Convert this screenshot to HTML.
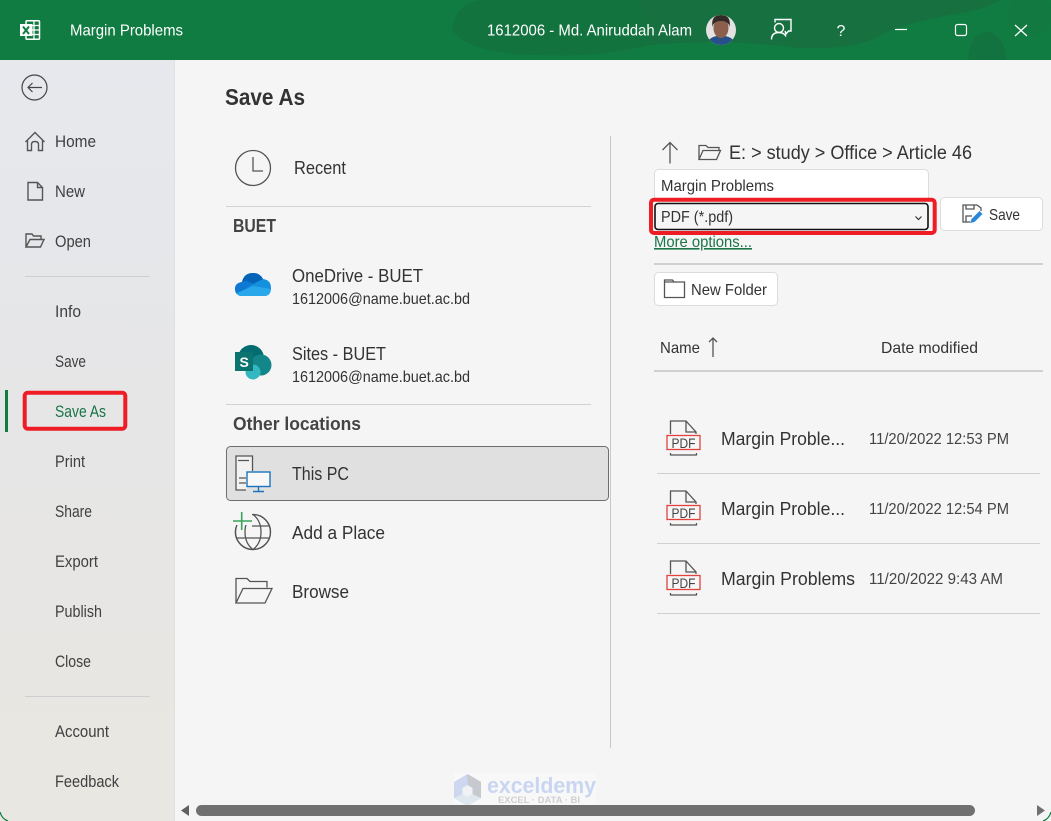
<!DOCTYPE html>
<html><head><meta charset="utf-8"><style>
html,body{margin:0;padding:0;width:1051px;height:821px;overflow:hidden;background:#f5f5f5}
svg{display:block}
text{font-family:"Liberation Sans",sans-serif;fill:#333;font-size:16px}
.s{font-size:16.5px;fill:#404040}
.m{font-size:18.5px;fill:#333}
.b{font-size:18.5px;font-weight:bold;fill:#444}
.w{fill:#fff;font-size:16px}
.t{font-size:16px;fill:#333}
.d{font-size:16px;fill:#444}
.n{font-size:18.5px;fill:#333}
.p{font-size:13.5px;fill:#444}
.i{fill:none;stroke:#444;stroke-width:1.2}
.g{fill:none;stroke:#555;stroke-width:1.3}
</style></head><body>
<svg width="1051" height="821" viewBox="0 0 1051 821" xmlns="http://www.w3.org/2000/svg">
<defs><linearGradient id="sb" x1="0" y1="0" x2="0" y2="1"><stop offset="0" stop-color="#e6e8ed"/><stop offset=".5" stop-color="#e6e6e6"/><stop offset="1" stop-color="#e9e7e1"/></linearGradient>
<clipPath id="hc"><rect width="1051" height="60"/></clipPath>
<clipPath id="av"><circle cx="721" cy="30" r="15"/></clipPath></defs>
<rect width="1051" height="821" fill="#f5f5f5"/>
<!-- header -->
<rect width="1051" height="60" fill="#107c41"/>
<g clip-path="url(#hc)">
<path d="M452 30Q455 5 480 0H640L650 45Q600 58 540 55Q470 55 452 30Z" fill="#13733f"/>
<path d="M640 0H1000Q985 10 950 15Q900 25 885 33Q860 50 800 48Q720 38 650 45Z" fill="#167040"/>
<path d="M968 60Q970 32 988 32Q1004 34 1006 60Z" fill="#137340"/>
<circle cx="1030" cy="14" r="22" fill="#127a41"/>
</g>
<!-- excel logo -->
<g>
<rect x="26" y="20.800" width="13.500" height="18.500" rx="1" fill="none" stroke="#fff" stroke-width="1.500"/>
<path d="M32 25.500h7.500M32 30h7.500M32 34.500h7.500M34 21v18" stroke="#fff" stroke-width="1.300"/>
<rect x="20" y="24" width="12.500" height="12" fill="#fff"/>
<path d="M23 26.500l6 7.500M29 26.500l-6 7.500" stroke="#107c41" stroke-width="2"/>
</g>
<text class="w" x="70" y="35.500" textLength="113" lengthAdjust="spacingAndGlyphs">Margin Problems</text>
<text class="w" x="487" y="35.500" textLength="205" lengthAdjust="spacingAndGlyphs">1612006 - Md. Aniruddah Alam</text>
<!-- avatar -->
<circle cx="721" cy="30" r="15" fill="#e3e1e1"/>
<g clip-path="url(#av)">
<path d="M706 45q3-8 11-9h8q8 1 11 9z" fill="#27508a"/>
<ellipse cx="721" cy="28" rx="7.500" ry="10" fill="#8c5f4c"/>
<path d="M712.500 27q-2-12 8.500-12 10.500 0 8.500 12-1-6-8.500-6-7.500 0-8.500 6z" fill="#322a26"/>
</g>
<!-- comments icon -->
<g fill="none" stroke="#fff" stroke-width="1.400">
<path d="M775 22.500v-3h16v11.500h-2.500l-2.500 3-1-3"/>
<circle cx="779" cy="28" r="4.500"/>
<path d="M771.500 39.500q0-7 7.500-7 5 0 7 4"/>
</g>
<text x="836.500" y="36" style="font-size:16px;fill:#fff">?</text>
<path d="M895 29.500h12" stroke="#fff" stroke-width="1.200"/>
<rect x="955.500" y="24.500" width="11" height="11" rx="2" fill="none" stroke="#fff" stroke-width="1.200"/>
<path d="M1015 25l12 11M1027 25l-12 11" stroke="#fff" stroke-width="1.300"/>
<!-- sidebar -->
<rect x="0" y="60" width="175" height="761" fill="url(#sb)"/>
<rect x="174" y="60" width="1" height="761" fill="#e0e0e0"/>
<circle cx="34.500" cy="87.500" r="12.500" class="i"/>
<path d="M42 87.500H28M32.500 83l-4.500 4.500 4.500 4.500" class="i"/>
<path d="M25.500 142l9.500-9.500 9.500 9.500M27.500 140.500V150.500h4v-6q0-3 3.500-3t3.500 3v6h4V140.500" class="g" style="stroke-width:1.400"/>
<path d="M28 182.500h9.500l5 5v12.500H28zM37.500 182.500v5h5" class="g" style="stroke-width:1.400"/>
<path d="M26 247v-13h6l1.500 2h7.500v3M26 247l4-7.500h14l-3.500 7.500z" class="g" style="stroke-width:1.400"/>
<text class="s" x="55" y="147" textLength="41" lengthAdjust="spacingAndGlyphs">Home</text>
<text class="s" x="55" y="197" textLength="30" lengthAdjust="spacingAndGlyphs">New</text>
<text class="s" x="55" y="247" textLength="36" lengthAdjust="spacingAndGlyphs">Open</text>
<rect x="25" y="276" width="125" height="1" fill="#cfcfcf"/>
<text class="s" x="55" y="317" textLength="26" lengthAdjust="spacingAndGlyphs">Info</text>
<text class="s" x="55" y="367" textLength="31" lengthAdjust="spacingAndGlyphs">Save</text>
<rect x="5" y="390" width="3" height="42" fill="#107c41"/>
<text class="s" x="55" y="417" textLength="51" lengthAdjust="spacingAndGlyphs" style="fill:#1a7448">Save As</text>
<rect x="24.700" y="392.700" width="100.600" height="36" rx="3" fill="none" stroke="#ee1c25" stroke-width="4"/>
<text class="s" x="55" y="467" textLength="30" lengthAdjust="spacingAndGlyphs">Print</text>
<text class="s" x="55" y="517" textLength="37" lengthAdjust="spacingAndGlyphs">Share</text>
<text class="s" x="55" y="567" textLength="43" lengthAdjust="spacingAndGlyphs">Export</text>
<text class="s" x="55" y="617" textLength="47" lengthAdjust="spacingAndGlyphs">Publish</text>
<text class="s" x="55" y="667" textLength="36" lengthAdjust="spacingAndGlyphs">Close</text>
<rect x="25" y="696" width="125" height="1" fill="#cfcfcf"/>
<text class="s" x="55" y="737" textLength="54" lengthAdjust="spacingAndGlyphs">Account</text>
<text class="s" x="55" y="787" textLength="64" lengthAdjust="spacingAndGlyphs">Feedback</text>
<!-- main -->
<text x="225" y="105" textLength="80" lengthAdjust="spacingAndGlyphs" style="font-size:23.500px;font-weight:bold;fill:#333">Save As</text>
<circle cx="253" cy="168" r="17.500" class="g"/>
<path d="M253 157v14h10" class="g"/>
<text class="m" x="294" y="174" textLength="52" lengthAdjust="spacingAndGlyphs">Recent</text>
<rect x="226" y="206" width="365" height="1" fill="#d2d2d2"/>
<text class="b" x="233" y="232" textLength="43" lengthAdjust="spacingAndGlyphs">BUET</text>
<!-- onedrive -->
<path d="M241 296Q235 295 235 289Q235 283 242 282Q244 273 253 273Q260 273 263 279Q271 280 271 288Q271 296 264 296Z" fill="#1490df"/>
<path d="M242 282Q244 273 253 273Q260 273 263 279L253 284L247 281Q244 281 242 282Z" fill="#0364b8"/>
<path d="M235 289Q235 283 242 282Q244 281 247 281L253 284L238 294Q235 292 235 289Z" fill="#0f78d4"/>
<path d="M237 293L253 286L271 289Q270 296 264 296H241Q238 296 237 293Z" fill="#28a8ea"/>
<text class="m" x="292" y="282" textLength="131" lengthAdjust="spacingAndGlyphs">OneDrive - BUET</text>
<text class="t" x="292" y="304" textLength="178" lengthAdjust="spacingAndGlyphs">1612006@name.buet.ac.bd</text>
<!-- sharepoint -->
<circle cx="251" cy="358" r="13" fill="#036c70"/>
<circle cx="261" cy="365" r="10.500" fill="#13868a"/>
<circle cx="253" cy="372" r="7.500" fill="#33b8c2"/>
<rect x="235" y="352" width="18" height="19" fill="#0b7470"/>
<text x="239.500" y="367" style="font-size:14px;font-weight:bold;fill:#fff">S</text>
<text class="m" x="292" y="360" textLength="94" lengthAdjust="spacingAndGlyphs">Sites - BUET</text>
<text class="t" x="292" y="382" textLength="178" lengthAdjust="spacingAndGlyphs">1612006@name.buet.ac.bd</text>
<rect x="226" y="404" width="365" height="1" fill="#d2d2d2"/>
<text class="b" x="233" y="430" textLength="128" lengthAdjust="spacingAndGlyphs">Other locations</text>
<!-- This PC -->
<rect x="226.500" y="446.500" width="382" height="54" rx="4" fill="#e0e0e0" stroke="#6e6e6e"/>
<path d="M246 490h-10v-34h16.500v15" fill="#f2f2f2" stroke="#555" stroke-width="1.300"/>
<path d="M238 460.500h11M239 478h7M239 483h7" stroke="#555" stroke-width="1.200"/>
<rect x="247" y="472" width="23" height="14.500" fill="#f8f8f8" stroke="#1b74bd" stroke-width="1.400"/>
<path d="M258.500 487v5M253 491.500h11" stroke="#1b74bd" stroke-width="1.400"/>
<text class="m" x="292" y="480" textLength="57" lengthAdjust="spacingAndGlyphs">This PC</text>
<!-- Add place -->
<circle cx="253" cy="532" r="17.500" class="g"/>
<path d="M253 514.500q8 6 8 17.500t-8 17.500q-8-6-8-17.500 0-5 1.500-8.500" class="g"/>
<path d="M252 526h18M236 538h34" class="g"/>
<rect x="231" y="511" width="21" height="14" fill="#f5f5f5"/>
<path d="M253 514.500a17.500 17.500 0 0 1 0 35a17.500 17.500 0 0 1-17-22" class="g"/>
<path d="M241.700 512v18M233 521h19" stroke="#3aa35c" stroke-width="1.600"/>
<text class="m" x="292" y="539" textLength="93" lengthAdjust="spacingAndGlyphs">Add a Place</text>
<!-- Browse -->
<path d="M236 603v-24.500h11l3 3h17v6M236 603l7-14.500h29l-7 14.500z" class="g"/>
<text class="m" x="292" y="598" textLength="57" lengthAdjust="spacingAndGlyphs">Browse</text>
<rect x="610" y="136" width="1" height="612" fill="#c8c8c8"/>
<!-- right column -->
<path d="M670 163.500v-21M662.500 150l7.500-7.500 7.500 7.500" class="g"/>
<path d="M699 159.500v-14h7l2 2h11v3M699 159.500l4-9h17.500l-4 9z" class="g"/>
<text x="729" y="159" textLength="243" lengthAdjust="spacingAndGlyphs" style="font-size:19.500px;fill:#333">E: &gt; study &gt; Office &gt; Article 46</text>
<rect x="654.500" y="169.500" width="274" height="40" rx="4" fill="#fff" stroke="#dcdcdc"/>
<text class="t" x="661" y="191" textLength="113" lengthAdjust="spacingAndGlyphs">Margin Problems</text>
<rect x="651" y="199.700" width="283.700" height="33.300" rx="3" fill="#f5f5f5" stroke="#ee1c25" stroke-width="4"/>
<rect x="655" y="203.500" width="273" height="26" rx="3" fill="#f5f5f5" stroke="#111" stroke-width="1.600"/>
<text class="t" x="661" y="222" textLength="72" lengthAdjust="spacingAndGlyphs">PDF (*.pdf)</text>
<path d="M915.500 216.500l3 3 3-3" fill="none" stroke="#333" stroke-width="1.200"/>
<rect x="940.500" y="197.500" width="102" height="33" rx="4" fill="#fff" stroke="#dcdcdc"/>
<path d="M970 222h-7v-17h14l4 3v3" class="g"/>
<path d="M966 205v4h8v-4M966 222v-6h6" class="g"/>
<path d="M970 223l1.500-4 8-8 3 3-8 8z" fill="#2b88d8"/>
<text class="t" x="989" y="220" textLength="31" lengthAdjust="spacingAndGlyphs">Save</text>
<text x="654" y="247" textLength="98" lengthAdjust="spacingAndGlyphs" text-decoration="underline" style="font-size:16px;fill:#1a7448">More options...</text>
<rect x="654" y="263" width="389" height="2" fill="#d0d0d0"/>
<rect x="654.500" y="272.500" width="123" height="33" rx="4" fill="#fff" stroke="#dcdcdc"/>
<path d="M664.500 297.500v-15.500h20v15.500zM664.500 282v-2h8l1.500 2" class="g"/>
<text class="t" x="691" y="295" textLength="76" lengthAdjust="spacingAndGlyphs">New Folder</text>
<text class="t" x="660" y="353" textLength="40" lengthAdjust="spacingAndGlyphs">Name</text>
<path d="M713 357v-19M709 342l4-4 4 4" class="g"/>
<text class="t" x="881" y="353" textLength="97" lengthAdjust="spacingAndGlyphs">Date modified</text>
<rect x="654" y="370" width="389" height="2" fill="#d0d0d0"/>
<!-- files -->
<g>
<path d="M670.500 434v-13h15.500l10 11v2M670.500 455h26M686 421v11h10M670.500 453v2.500M696.500 453v2.500" fill="none" stroke="#555" stroke-width="1.300"/>
<rect x="667" y="435.500" width="33" height="14" fill="#f7f7f7" stroke="#e2433f" stroke-width="1.300"/>
<text class="p" x="671.500" y="448" textLength="24" lengthAdjust="spacingAndGlyphs">PDF</text>
</g>
<g transform="translate(0 70)">
<path d="M670.500 434v-13h15.500l10 11v2M670.500 455h26M686 421v11h10M670.500 453v2.500M696.500 453v2.500" fill="none" stroke="#555" stroke-width="1.300"/>
<rect x="667" y="435.500" width="33" height="14" fill="#f7f7f7" stroke="#e2433f" stroke-width="1.300"/>
<text class="p" x="671.500" y="448" textLength="24" lengthAdjust="spacingAndGlyphs">PDF</text>
</g>
<g transform="translate(0 140)">
<path d="M670.500 434v-13h15.500l10 11v2M670.500 455h26M686 421v11h10M670.500 453v2.500M696.500 453v2.500" fill="none" stroke="#555" stroke-width="1.300"/>
<rect x="667" y="435.500" width="33" height="14" fill="#f7f7f7" stroke="#e2433f" stroke-width="1.300"/>
<text class="p" x="671.500" y="448" textLength="24" lengthAdjust="spacingAndGlyphs">PDF</text>
</g>
<text class="n" x="721" y="445" textLength="124" lengthAdjust="spacingAndGlyphs">Margin Proble...</text>
<text class="d" x="869" y="444" textLength="140" lengthAdjust="spacingAndGlyphs">11/20/2022 12:53 PM</text>
<rect x="657" y="473" width="383" height="1" fill="#d0d0d0"/>
<text class="n" x="721" y="515" textLength="124" lengthAdjust="spacingAndGlyphs">Margin Proble...</text>
<text class="d" x="869" y="514" textLength="140" lengthAdjust="spacingAndGlyphs">11/20/2022 12:54 PM</text>
<rect x="657" y="543" width="383" height="1" fill="#d0d0d0"/>
<text class="n" x="721" y="585" textLength="134" lengthAdjust="spacingAndGlyphs">Margin Problems</text>
<text class="d" x="869" y="584" textLength="134" lengthAdjust="spacingAndGlyphs">11/20/2022 9:43 AM</text>
<rect x="657" y="613" width="383" height="1" fill="#d0d0d0"/>
<!-- watermark -->
<rect x="454" y="773" width="142" height="33" fill="#f8f8f8"/>
<path d="M467.500 774l13.500 8v16l-13.500 8-13.500-8v-16z" fill="#cdd8f0"/>
<path d="M467.500 774l13.500 8v16l-13.500-6z" fill="#c6c9cd"/>
<path d="M454 798l13.500 8 13.500-8-13.500-6z" fill="#dfe8ee"/>
<path d="M467.500 785l5 3v6l-5 3-5-3v-6z" fill="#f0f2f6"/>
<text x="487" y="793" textLength="109" lengthAdjust="spacingAndGlyphs" style="font-size:22px;font-weight:bold;fill:#c9d6f2">exceldemy</text>
<text x="498" y="803" textLength="82" lengthAdjust="spacingAndGlyphs" style="font-size:9px;font-weight:bold;fill:#cfcfd2">EXCEL · DATA · BI</text>
<!-- scrollbar -->
<path d="M181 810.500l8-5.500v11z" fill="#606060"/>
<rect x="196" y="805" width="779" height="11" rx="5.500" fill="#707070"/>
<path d="M1045 810.500l-8-5.500v11z" fill="#707070"/>
<path d="M0 812q2 7 8 9" fill="none" stroke="#107c41" stroke-width="1.200"/>
<path d="M1051 812q-2 7-8 9" fill="none" stroke="#107c41" stroke-width="1.200"/>
</svg>
</body></html>
